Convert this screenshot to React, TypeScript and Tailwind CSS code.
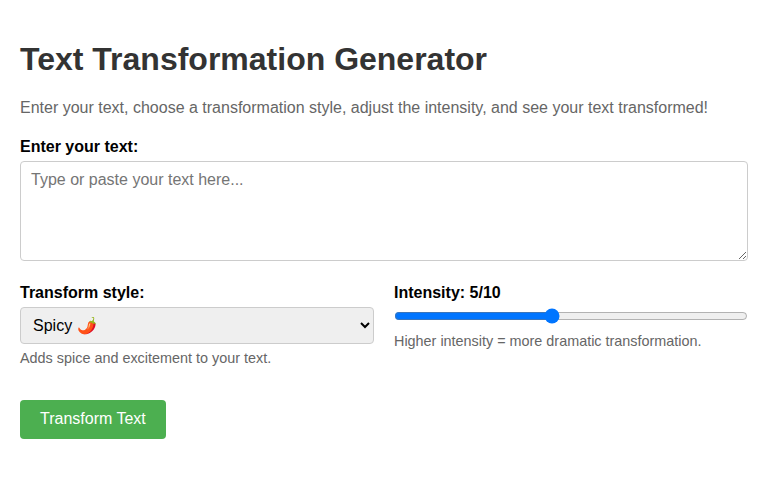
import { useState } from 'react';

const STYLES: Record<string, { label: string; description: string }> = {
  spicy: { label: 'Spicy 🌶️', description: 'Adds spice and excitement to your text.' },
  formal: { label: 'Formal 🎩', description: 'Makes your text sound polished and professional.' },
  pirate: { label: 'Pirate 🏴‍☠️', description: 'Turns your text into pirate speak.' },
};

export default function App() {
  const [text, setText] = useState('');
  const [style, setStyle] = useState('spicy');
  const [intensity, setIntensity] = useState(5);

  return (
    <div className="p-5 font-['Liberation_Sans',Arial,sans-serif] text-[#333]">
      <h1 className="mt-[21px] mb-[21.44px] text-[32px] font-bold leading-[36.8px]">Text Transformation Generator</h1>
      <p className="mb-5 text-base leading-[18.4px] text-[#666]">
        Enter your text, choose a transformation style, adjust the intensity, and see your text transformed!
      </p>

      <label className="mb-[5px] block text-base font-bold leading-[18.4px] text-black">Enter your text:</label>
      <textarea
        value={text}
        onChange={(e) => setText(e.target.value)}
        placeholder="Type or paste your text here..."
        className="block h-[100px] w-full rounded border border-[#ccc] px-[10px] py-[9px] text-base leading-[18.4px] text-[#333] placeholder:text-[#757575]"
      />

      <div className="mt-[23px] grid grid-cols-2 gap-5">
        <div>
          <label className="mb-[5px] block text-base font-bold leading-[18.4px] text-black">Transform style:</label>
          <select
            value={style}
            onChange={(e) => setStyle(e.target.value)}
            className="block h-[37px] w-full rounded border border-[#ccc] bg-[#efefef] px-2 text-base text-black"
          >
            {Object.entries(STYLES).map(([key, s]) => (
              <option key={key} value={key}>
                {s.label}
              </option>
            ))}
          </select>
          <p className="mt-[6px] text-[14.4px] leading-[16.5px] text-[#666]">{STYLES[style].description}</p>
        </div>
        <div>
          <label className="mb-[5.5px] block text-base font-bold leading-[18.4px] text-black">Intensity: {intensity}/10</label>
          <input
            type="range"
            min={1}
            max={10}
            value={intensity}
            onChange={(e) => setIntensity(Number(e.target.value))}
            className="block w-full accent-[#0075ff]"
          />
          <p className="mt-[9px] text-[14.4px] leading-[16.5px] text-[#666]">Higher intensity = more dramatic transformation.</p>
        </div>
      </div>

      <button className="mt-[33.5px] rounded bg-[#4caf50] px-5 py-[10px] text-base leading-[18.4px] text-white">
        Transform Text
      </button>
    </div>
  );
}
